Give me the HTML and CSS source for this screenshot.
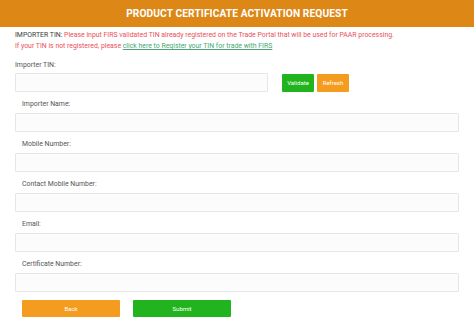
FILE: index.html
```html
<!DOCTYPE html>
<html>
<head>
	<meta charset="utf-8">
	<title>Product Certificate Activation Request</title>
	<link rel="stylesheet" href="styles.css">
</head>
<body>
	<div class="header">
		<h2>PRODUCT CERTIFICATE ACTIVATION REQUEST</h2>
	</div>
	<div class="notice">
		<p><b>IMPORTER TIN:</b> Please input FIRS validated TIN already registered on the Trade Portal that will be used for PAAR processing.</p>
		<p>If your TIN is not registered, please <a href="#">click here to Register your TIN for trade with FIRS</a></p>
	</div>
	<form class="form">
		<div class="tin">
			<label>Importer TIN:</label>
			<div class="tin-row">
				<input type="text" class="tin-input">
				<button type="button" class="btn green small">Validate</button>
				<button type="button" class="btn orange small">Refresh</button>
			</div>
		</div>
		<div class="field">
			<label>Importer Name:</label>
			<input type="text">
		</div>
		<div class="field">
			<label>Mobile Number:</label>
			<input type="text">
		</div>
		<div class="field">
			<label>Contact Mobile Number:</label>
			<input type="text">
		</div>
		<div class="field">
			<label>Email:</label>
			<input type="text">
		</div>
		<div class="field">
			<label>Certificate Number:</label>
			<input type="text">
		</div>
		<div class="actions">
			<button type="button" class="btn orange wide">Back</button>
			<button type="button" class="btn green wide">Submit</button>
		</div>
	</form>
</body>
</html>
```
FILE: styles.css
```css
body{margin: 0;font-family: Roboto, 'Noto Sans', sans-serif;background-color: #fff;color: #555;font-size: 6.9px;}
.header{background-color: #dc8716;height: 27px;display: flex;align-items: center;justify-content: center;}
.header h2{margin: 0;color: #fff;font-size: 10.2px;font-weight: bold;letter-spacing: 0.1px;}
.notice{padding: 3px 15px 0;}
.notice p{margin: 0;line-height: 11px;color: #ea5058;}
.notice b{font-weight: normal;color: #3a3a3a;}
.notice a{color: #45a873;text-decoration: underline;}
.form{padding: 9px 15px 0;}
label{display: block;line-height: 9px;color: #555;}
input{display: block;box-sizing: border-box;width: 100%;height: 19px;margin: 0;border: 1px solid #e6e6e6;background-color: #fcfcfc;border-radius: 1px;}
.tin label{margin-bottom: 3px;}
.tin-row{display: flex;align-items: center;}
.tin-row .tin-input{width: 253px;margin-right: 14px;}
.field{margin-top: 8px;}
.field label{padding-left: 7px;margin-bottom: 5px;line-height: 8px;margin-top: 4px;}
.btn{border: none;color: #fff;font-family: Roboto, sans-serif;font-size: 6px;padding: 0;cursor: pointer;border-radius: 1px;}
.green{background-color: #22b41e;}
.orange{background-color: #f39c1f;}
.small{height: 18px;width: 32px;margin-right: 3px;}
.actions{display: flex;gap: 13px;padding: 8px 7px 0;}
.wide{width: 98px;height: 17px;}
```
